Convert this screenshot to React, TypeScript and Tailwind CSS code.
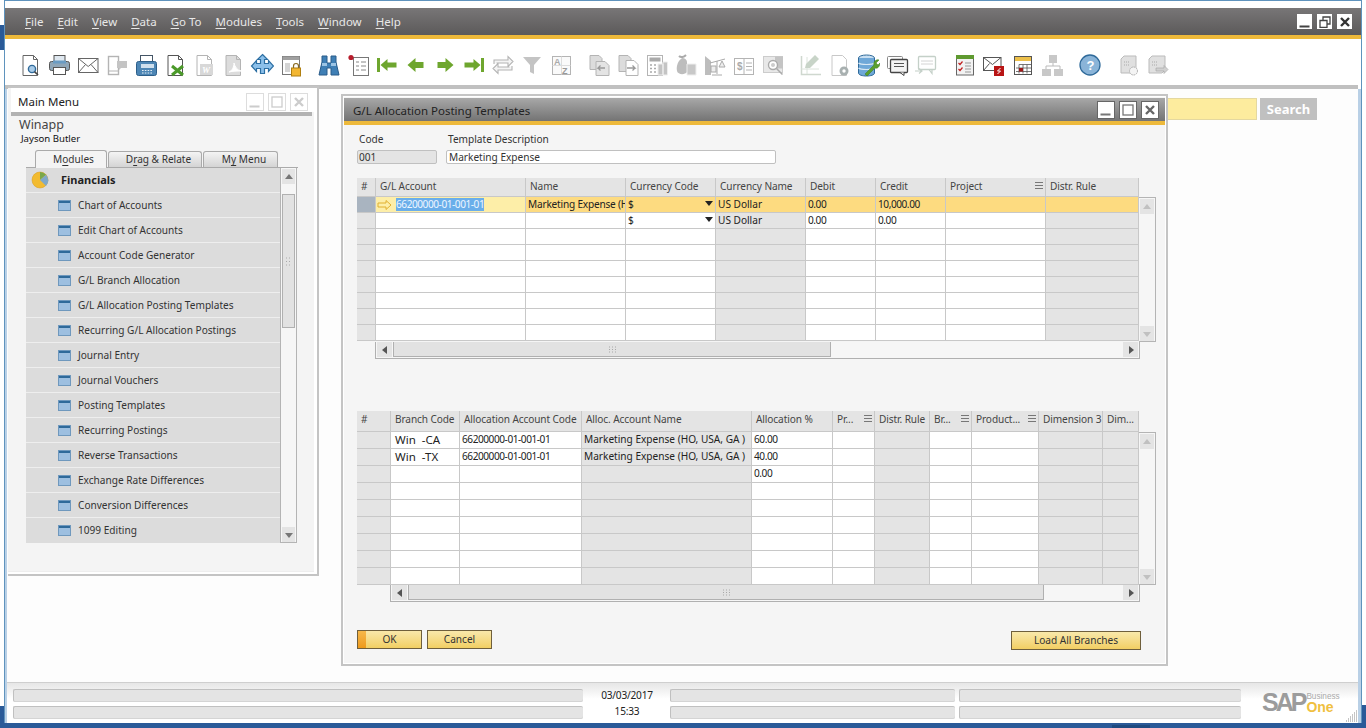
import React from "react";

const D = "#b4b4b4";
const doc = (s: string, f = "#fff") => (
  <>
    <path d="M5 2.500h10.500l4 4v16H5z" fill={f} stroke={s} />
    <path d="M15.500 2.500v4h4" fill="none" stroke={s} />
  </>
);

const icons: React.ReactNode[] = [
  <>{doc("#666")}<circle cx="14" cy="16" r="3.600" fill="#a8cbe8" stroke="#2f6a9a" strokeWidth="1.400" /><path d="M16.500 18.700l3.500 3.300" stroke="#444" strokeWidth="1.600" /></>,
  <><rect x="7" y="2.500" width="11" height="7" fill="#dfe8f0" stroke="#555" /><rect x="2.500" y="8.500" width="20" height="9" rx="2" fill="#8fa6b8" stroke="#555" /><rect x="6" y="7.500" width="13" height="3" fill="#6a9cc4" /><rect x="6.500" y="14.500" width="12" height="7" fill="#fff" stroke="#555" /></>,
  <><rect x="2.500" y="5.500" width="19.500" height="14" fill="#fff" stroke="#666" /><path d="M2.500 5.500l9.700 8 9.800-8M2.500 19.500l7-8M22 19.500l-7-8" fill="none" stroke="#666" /></>,
  <><rect x="3.500" y="3.500" width="10" height="18" fill="#fff" stroke={D} strokeWidth="1.400" /><path d="M3.500 18h10" stroke={D} /><path d="M12 8h10v7h-6l-2 2v-2h-2z" fill="#c4c4c4" /></>,
  <><rect x="6.500" y="2.500" width="12" height="8" fill="#fff" stroke="#456" /><rect x="2.500" y="8.500" width="20" height="14" rx="2" fill="#4d86b5" stroke="#2d5f8a" /><rect x="7" y="11" width="13" height="4" fill="#cfe0ee" /><path d="M8 17.500h11M8 20h11" stroke="#e4eef6" strokeWidth="1.200" strokeDasharray="1.600 1.200" /></>,
  <>{doc("#555")}<path d="M9 13l11 9M20 13l-11 9" stroke="#4c9a2a" strokeWidth="3" /></>,
  <>{doc(D)}<rect x="8" y="11" width="13" height="11" fill="#d8d8d8" /><text x="10" y="20" fontSize="9" fontStyle="italic" fontWeight="700" fill="#fff" fontFamily="Liberation Serif">W</text></>,
  <>{doc(D, "#dcdcdc")}<path d="M8 19c3-1 5-5 5-9 1 4 3 7 7 8-4 0-8 0-12 1z" fill="#fff" stroke="#fff" /></>,
  <path d="M12.500 1.500l5 5h-3v4h4v-3l5 5.500-5 5.500v-3h-4v5h-4v-5h-4v3l-5-5.500 5-5.500v3h4v-4h-3z" fill="#8cc0ea" stroke="#2d6fa3" strokeWidth="1.200" />,
  <><rect x="3.500" y="3.500" width="17" height="18" fill="#fff" stroke="#777" /><rect x="3.500" y="3.500" width="17" height="3.500" fill="#a0a0a0" /><rect x="6" y="10" width="5" height="9" fill="#d4d4d4" /><rect x="12.500" y="15" width="9" height="8" fill="#f2b632" stroke="#b07f10" /><path d="M14.500 15v-2a2.500 2.500 0 015 0v2" fill="none" stroke="#8a6a20" strokeWidth="1.200" /></>,
  <><path d="M5 3h5v7h4V3h5v6l3 13h-8v-7h-4v7H2L5 9z" fill="#3f7fb5" stroke="#2a5c8a" /><path d="M5 10h5v3H5zM14 10h5v3h-5z" fill="#9cc4e4" /></>,
  <><rect x="7.500" y="4.500" width="15" height="18" fill="#fff" stroke="#777" /><path d="M10 9h3M15 9h5M10 13h3M15 13h5M10 17h3M15 17h5" stroke="#888" /><circle cx="5" cy="4.500" r="2.600" fill="#b81c2c" /></>,
  <><rect x="2" y="5" width="3" height="14" fill="#6ea62e" /><path d="M5.500 12l7-6v3.500h9v5h-9v3.500z" fill="#6ea62e" /></>,
  <path d="M3.500 12l8-7v4h8v6h-8v4z" fill="#6ea62e" />,
  <path d="M20.500 12l-8-7v4h-8v6h8v4z" fill="#6ea62e" />,
  <><rect x="19" y="5" width="3" height="14" fill="#6ea62e" /><path d="M18.500 12l-7-6v3.500h-9v5h9v3.500z" fill="#6ea62e" /></>,
  <path d="M3 11V7h14V3.500l5 5-5 5V10H5.500M21 13v4H7v3.500l-5-5 5-5V14h11.500" fill="#f4f4f4" stroke={D} strokeWidth="1.100" />,
  <path d="M3 4h18l-7 8v9l-4-2v-7z" fill="#c4c4c4" />,
  <><rect x="3.500" y="3.500" width="18" height="18" fill="#fafafa" stroke={D} /><path d="M3.500 12.500h18M12.500 3.500v18" stroke="#ddd" /><text x="5" y="12" fontSize="9" fontWeight="700" fill="#aaa" fontFamily="Liberation Sans">A</text><text x="13" y="20.500" fontSize="9" fontWeight="700" fill="#999" fontFamily="Liberation Sans">Z</text></>,
  <><path d="M3 2.500h9l3 3v11H3z" fill="#dcdcdc" stroke={D} /><path d="M9 8.500h9l4 4v10H9z" fill="#e4e4e4" stroke={D} /><path d="M18 15h-7l2.500-2.500M11 15l2.500 2.500" fill="none" stroke="#999" strokeWidth="1.300" /></>,
  <><path d="M3 2.500h9l3 3v13H3z" fill="#dcdcdc" stroke={D} /><path d="M10 7.500h8l4 4v11H10z" fill="#fff" stroke={D} /><path d="M11 15h8l-2.500-2.500M19 15l-2.500 2.500" fill="none" stroke="#999" strokeWidth="1.300" /></>,
  <><rect x="2.500" y="2.500" width="15" height="20" fill="#fff" stroke={D} /><rect x="4.500" y="4.500" width="11" height="4" fill="#aaa" /><path d="M5 12h2M9 12h2M5 15.500h2M9 15.500h2M5 19h2M9 19h2" stroke="#aaa" strokeWidth="1.300" /><path d="M13 11h5v11h-5zM18 9h4.500v13H18z" fill="#c4c4c4" stroke="#eee" /></>,
  <><path d="M8 5c-4 3-6 8-5 13 1 4 8 4 10 1V9C13 7 11 5 8 5z" fill="#bdbdbd" /><path d="M5 3c2 2 5 1 7-1" stroke="#aaa" strokeWidth="2" fill="none" /><path d="M13 11h9v11h-9z" fill="#c8c8c8" stroke="#eee" /></>,
  <><path d="M2 3l6 5v14H2z" fill="#bdbdbd" /><path d="M7 10l15-4M14 8v13M9 22h10" stroke="#aaa" /><rect x="8" y="13" width="5" height="6" fill="#eee" stroke="#aaa" /><path d="M16 14l3-6 3 6z" fill="#eee" stroke="#aaa" /></>,
  <><rect x="2.500" y="5.500" width="19" height="16" fill="#fff" stroke={D} /><path d="M12 5.500v16M14 10h6M14 13.500h6M14 17h6" stroke={D} /><text x="5" y="17" fontSize="10" fontWeight="700" fill="#aaa" fontFamily="Liberation Sans">$</text></>,
  <><rect x="2.500" y="3.500" width="19" height="16" fill="#e8e8e8" stroke="#ccc" /><rect x="14" y="3.500" width="8" height="12" fill="#c4c4c4" /><circle cx="12" cy="12" r="4.500" fill="#fff" stroke="#aaa" strokeWidth="1.400" /><circle cx="12" cy="12" r="2" fill="#ccc" /><path d="M15.500 15.500l6 6" stroke="#aaa" strokeWidth="1.500" /></>,
  <><path d="M3.500 3v18.500H23" fill="none" stroke="#cfd8cf" strokeWidth="1.500" /><path d="M3.500 16H21M9 4v17" stroke="#dce4dc" /><path d="M7 15l1-4 9-9 4 4-9 9z" fill="#c8d4c8" /></>,
  <><path d="M5 2.500h10.500l4 4v16H5z" fill="#fff" stroke="#c8c8c8" /><circle cx="17" cy="18" r="4.500" fill="#a8b0b0" /><circle cx="17" cy="18" r="1.700" fill="#fff" /></>,
  <><ellipse cx="10.500" cy="5" rx="8" ry="3" fill="#c8dff2" stroke="#2f6a9a" /><path d="M2.500 5v15c0 2 4 3 8 3s8-1 8-3V5" fill="#6fa8d8" stroke="#2f6a9a" /><path d="M2.500 10c2 2 14 2 16 0M2.500 15c2 2 14 2 16 0" fill="none" stroke="#d8e8f4" strokeWidth="1.200" /><path d="M9 21l9-9c-1-3 2-6 5-5l-3 3 2 2 2-2c0 4-3 6-5 5l-8 8z" fill="#5aa02c" stroke="#3a7a18" strokeWidth=".5" /></>,
  <><rect x="2.500" y="3.500" width="15" height="12" rx="1" fill="#fff" stroke="#888" /><rect x="5.500" y="6.500" width="17" height="13" rx="1" fill="#f4f4f4" stroke="#444" strokeWidth="1.300" /><path d="M9 10.500h10M9 13.500h10" stroke="#555" /><path d="M15 19.500l4 3v-3" fill="#fff" stroke="#444" /></>,
  <><rect x="4.500" y="3.500" width="17" height="13" rx="1" fill="#fff" stroke="#c4d0c8" strokeWidth="1.300" /><path d="M7 8h12M7 11h12" stroke="#d4d4d4" /><path d="M1 18h7M5 15.500l3 2.500-3 2.500M15 16.500l3 4v-4" fill="none" stroke="#c4d0c8" strokeWidth="1.200" /></>,
  <><rect x="3.500" y="4" width="17" height="18" fill="#f2f2f2" stroke="#666" /><rect x="3" y="2" width="18" height="4" fill="#5f9a30" /><path d="M5.500 10l1.500 1.500 2.500-3M5.500 16l1.500 1.500 2.500-3" fill="none" stroke="#c02020" strokeWidth="1.200" /><path d="M12 10h6M12 13h6M12 16h6M12 19h6" stroke="#999" /></>,
  <><rect x="1.500" y="4.500" width="17.500" height="13" fill="#fff" stroke="#555" /><path d="M1.500 4.500l9 7 8.500-7M1.500 17.500l6-7" fill="none" stroke="#555" /><rect x="12" y="13" width="10" height="10" fill="#b81414" /><path d="M18.500 15l-3 3h3l-3 3" stroke="#fff" fill="none" /></>,
  <><rect x="3.500" y="3.500" width="17" height="18" fill="#fff" stroke="#555" /><rect x="4" y="4" width="16" height="4" fill="#edc04a" /><path d="M8 11.500h12M5 15h15M5 18.500h15M8 11.500v9M12 11.500v9M16 11.500v9" stroke="#555" strokeWidth=".8" /><rect x="8" y="15" width="4" height="3.500" fill="#a01818" /></>,
  <><rect x="9" y="2" width="8" height="8" fill="#c8c8c8" /><path d="M13 10v3M6 13h14v3M6 13v3" stroke="#bbb" fill="none" /><rect x="2" y="16" width="9" height="7" fill="#c8c8c8" /><rect x="14" y="16" width="9" height="7" fill="#c8c8c8" /></>,
  <><circle cx="12" cy="12" r="10" fill="#8ab4d8" stroke="#2f6a9a" strokeWidth="1.300" /><text x="8.500" y="16.500" fontSize="13" fontWeight="700" fill="#fff" fontFamily="Liberation Sans">?</text></>,
  <><path d="M5 6l3-3h12v14l-3 3H5z" fill="#e0e0e0" stroke="#bbb" /><path d="M8 9h6M8 12h6" stroke="#aaa" strokeDasharray="1 1" /><circle cx="17.500" cy="18" r="4" fill="#f4f4f4" stroke="#aaa" strokeDasharray="1.500 .8" /></>,
  <><path d="M4 6l3-3h13v14l-3 3H4z" fill="#e0e0e0" stroke="#bbb" /><path d="M7 9h6M7 12h6" stroke="#aaa" strokeDasharray="1 1" /><path d="M11 15h8v-2.500l4 4-4 4V18h-8z" fill="#d0d0d0" stroke="#aaa" strokeWidth=".7" /></>,
];

const gapBefore: Record<number, string> = {
  10: "ml-[9px]", 19: "ml-[9px]", 26: "ml-[8px]", 31: "ml-[10px]", 35: "ml-[9px]", 36: "ml-[9px]",
};

function Toolbar() {
  return (
    <div className="flex h-[46px] items-center bg-white pl-[10px] pt-[6px]">
      {icons.map((ic, i) => (
        <div key={i} className={`flex w-[29px] shrink-0 justify-center ${gapBefore[i] ?? ""}`}>
          <svg width="24" height="24" viewBox="0 0 24 24">{ic}</svg>
        </div>
      ))}
    </div>
  );
}

function Ul({ a, u, b }: { a?: string; u: string; b?: string }) {
  return (
    <span>
      {a}
      <span className="underline underline-offset-2">{u}</span>
      {b}
    </span>
  );
}

function WinBtn({ kind, cls }: { kind: "min" | "max" | "restore" | "close"; cls: string }) {
  return (
    <div className={`flex items-center justify-center ${cls}`}>
      <svg width="12" height="12" viewBox="0 0 12 12" className="text-current">
        {kind === "min" && <rect x="0.500" y="9.500" width="10" height="2" fill="currentColor" />}
        {kind === "max" && <rect x="1" y="1" width="10" height="10" fill="none" stroke="currentColor" strokeWidth="1.300" />}
        {kind === "restore" && (
          <path d="M1 4.500h7v7H1zM4 4.500V1h7v7H8" fill="none" stroke="currentColor" strokeWidth="1.300" />
        )}
        {kind === "close" && <path d="M2 2l8 8M10 2l-8 8" stroke="currentColor" strokeWidth="2.400" />}
      </svg>
    </div>
  );
}

function Tri({ dir, c = "#777" }: { dir: "up" | "down" | "left" | "right"; c?: string }) {
  const d = { up: "M1 7l4-5 4 5z", down: "M1 3l4 5 4-5z", left: "M7 1L2 5l5 4z", right: "M3 1l5 4-5 4z" }[dir];
  return (
    <svg width="10" height="10" viewBox="0 0 10 10">
      <path d={d} fill={c} />
    </svg>
  );
}

const grips = (
  <svg width="9" height="7" viewBox="0 0 9 7">
    <path d="M1 1h1M4 1h1M7 1h1M1 3.500h1M4 3.500h1M7 3.500h1M1 6h1M4 6h1M7 6h1" stroke="#a8a8a8" />
  </svg>
);

const menuItems = [
  "Chart of Accounts", "Edit Chart of Accounts", "Account Code Generator", "G/L Branch Allocation",
  "G/L Allocation Posting Templates", "Recurring G/L Allocation Postings", "Journal Entry", "Journal Vouchers",
  "Posting Templates", "Recurring Postings", "Reverse Transactions", "Exchange Rate Differences",
  "Conversion Differences", "1099 Editing",
];

function MainMenu() {
  return (
    <div className="absolute left-[8px] top-[86px] flex h-[490px] w-[311px] flex-col border-2 border-l-0 border-[#c4c4c4] bg-white pb-[2px] pr-[3px]">
      <div className="flex h-[488px] flex-col bg-[#f4f4f4] pl-[3px] shadow-[inset_0_-1px_0_#eee]">
        <div className="flex h-[24px] shrink-0 items-center justify-between bg-white pl-[7px] pr-[6px] pt-[4px]">
          <span className="text-[11.500px] text-[#222]">Main Menu</span>
          <div className="flex gap-[4px]">
            <WinBtn kind="min" cls="h-[18px] w-[18px] border border-[#ddd] bg-white text-[#ccc]" />
            <WinBtn kind="max" cls="h-[18px] w-[18px] border border-[#ddd] bg-white text-[#ccc]" />
            <WinBtn kind="close" cls="h-[18px] w-[18px] border border-[#ddd] bg-white text-[#ccc]" />
          </div>
        </div>
        <div className="mr-[2px] h-[4px] shrink-0 bg-[#b2b2b2]" />
        <div className="mt-[1px] pl-[8px] text-[12.500px] leading-[15px] text-[#444]">Winapp</div>
        <div className="pl-[10px] text-[9.600px] leading-[13px] text-[#111]">Jayson Butler</div>
        <div className="ml-[24px] mt-[5px] flex h-[17px] items-end text-[10.100px] text-[#333]">
          <div className="relative z-10 -mb-px flex h-[18px] w-[72px] items-center justify-center rounded-t-[3px] border border-b-0 border-[#aaa] bg-[#f4f4f4] pl-[5px] pt-[1px]">
            <Ul a="M" u="o" b="dules" />
          </div>
          <div className="ml-[1px] flex h-[16px] w-[94px] items-center justify-center rounded-t-[3px] border border-b-0 border-[#aaa] bg-gradient-to-b from-[#f4f4f4] to-[#d4d4d4] pl-[7px] pt-[1px]">
            <Ul a="D" u="r" b="ag & Relate" />
          </div>
          <div className="ml-[1px] flex h-[16px] w-[75px] items-center justify-center rounded-t-[3px] border border-b-0 border-[#aaa] bg-gradient-to-b from-[#f4f4f4] to-[#d4d4d4] pl-[7px] pt-[1px]">
            <Ul a="M" u="y" b=" Menu" />
          </div>
        </div>
        <div className="ml-[15px] flex h-[376px] w-[272px] border-t border-[#aaa]">
          <div className="w-[254px] shrink-0 bg-[#dcdcdc]">
            <div className="flex h-[25px] items-center border-b border-[#eee] pl-[5px]">
              <svg width="18" height="18" viewBox="0 0 18 18">
                <circle cx="9" cy="9" r="8" fill="#f2bb30" stroke="#d89a18" strokeWidth=".5" />
                <path d="M9 9V1a8 8 0 016 2.700z" fill="#7aa84a" />
                <path d="M9 9l6-5.300A8 8 0 0115 15z" fill="#7fa8c8" />
              </svg>
              <span className="ml-[12px] text-[11px] font-bold text-[#222]">Financials</span>
            </div>
            {menuItems.map((m) => (
              <div key={m} className="flex h-[25px] items-center border-b border-[#eee] pl-[33px] last:border-b-0">
                <span className="h-[9px] w-[11px] shrink-0 border-t-2 border-[#2f6a9a] bg-[#9dbfe0] outline outline-1 outline-[#6f98bd]" />
                <span className="ml-[8px] pt-[1px] text-[10.100px] text-[#333]">{m}</span>
              </div>
            ))}
          </div>
          <div className="flex w-[17px] shrink-0 flex-col items-center border-x border-b border-[#b4b4b4] bg-[#f6f6f6] px-[1px] pt-[1px]">
            <div className="flex h-[15px] w-full items-center justify-center bg-[#e4e4e4]"><Tri dir="up" /></div>
            <div className="mt-[10px] flex h-[134px] w-full items-center justify-center border border-[#b0b0b0] bg-[#e2e2e2]">
              <svg width="7" height="9" viewBox="0 0 7 9"><path d="M1 1h1M4 1h1M1 4.500h1M4 4.500h1M1 8h1M4 8h1" stroke="#aaa" /></svg>
            </div>
            <div className="flex-1" />
            <div className="flex h-[15px] w-full items-center justify-center bg-[#e4e4e4]"><Tri dir="down" /></div>
          </div>
        </div>
      </div>
    </div>
  );
}

function VBar({ h }: { h: string }) {
  return (
    <div className={`flex w-[17px] shrink-0 flex-col border-y border-r border-[#b4b4b4] bg-[#f6f6f6] px-[1px] pt-[1px] ${h}`}>
      <div className="flex h-[15px] items-center justify-center bg-[#e4e4e4]"><Tri dir="up" c="#c0c0c0" /></div>
      <div className="flex-1" />
      <div className="flex h-[15px] items-center justify-center bg-[#e4e4e4]"><Tri dir="down" c="#c0c0c0" /></div>
    </div>
  );
}

function HBar({ cls, thumb }: { cls: string; thumb: string }) {
  return (
    <div className={`flex h-[17px] items-center border-x border-b border-[#b0b0b0] bg-[#f6f6f6] px-[1px] pb-[1px] ${cls}`}>
      <div className="flex h-full w-[15px] shrink-0 items-center justify-center bg-[#e4e4e4]"><Tri dir="left" c="#555" /></div>
      <div className={`ml-[1px] flex h-full shrink-0 items-center justify-center border-x border-b border-[#b0b0b0] bg-[#e2e2e2] ${thumb}`}>{grips}</div>
      <div className="ml-auto flex h-full w-[15px] shrink-0 items-center justify-center bg-[#e4e4e4]"><Tri dir="right" c="#555" /></div>
    </div>
  );
}

const line = "border-r border-b border-[#c8c8c8]";
const isNum = (s?: string) => !!s && /^[\d,.\-]+$/.test(s);

function Head({ label, menu, pb }: { label: string; menu?: boolean; pb: string }) {
  return (
    <div className={`relative flex items-center overflow-hidden whitespace-nowrap bg-[#e4e4e4] pl-[4px] tracking-[-0.1px] text-[#444] ${pb} ${line}`}>
      {label}
      {menu && (
        <svg width="8" height="7" viewBox="0 0 8 7" className="absolute right-[2px] top-[4px]">
          <path d="M0 .500h8M0 3.500h8M0 6.500h8" stroke="#777" />
        </svg>
      )}
    </div>
  );
}

function Cell({ bg, children, pad = "pl-[2px]" }: { bg: string; children?: React.ReactNode; pad?: string }) {
  return (
    <div className={`relative flex items-center overflow-hidden whitespace-nowrap text-[#222] ${pad} ${bg} ${line}`}>{children}</div>
  );
}

function Val({ v }: { v?: string }) {
  const t = isNum(v) ? "tracking-[-0.45px]" : v === "Marketing Expense (H" ? "tracking-[-0.2px]" : "";
  return <span className={t}>{v}</span>;
}

const cols1 = [
  { h: "#", grey: true }, { h: "G/L Account" }, { h: "Name" }, { h: "Currency Code" }, { h: "Currency Name", grey: true },
  { h: "Debit" }, { h: "Credit" }, { h: "Project", menu: true }, { h: "Distr. Rule", grey: true },
];
const rows1: (string | undefined)[][] = [
  [undefined, undefined, "Marketing Expense (H", "$", "US Dollar", "0.00", "10,000.00"],
  [undefined, undefined, undefined, "$", "US Dollar", "0.00", "0.00"],
  ...Array.from({ length: 7 }, () => [] as (string | undefined)[]),
];

function Grid1() {
  return (
    <div className="ml-[13px] mt-[14px] w-[799px]">
      <div className="flex">
        <div className="grid w-[782px] grid-cols-[19px_150px_100px_90px_90px_70px_70px_100px_93px] grid-rows-[19px_repeat(9,16px)] text-[10.100px]">
          {cols1.map((c) => <Head key={c.h} label={c.h} menu={c.menu} pb="pb-[1px]" />)}
          {rows1.map((r, ri) =>
            cols1.map((c, ci) => {
              const sel = ri === 0;
              let bg = c.grey ? "bg-[#e4e4e4]" : "bg-white";
              if (sel) bg = "bg-[#fddb80]";
              if (sel && ci === 0) bg = "bg-[#a9b4c0]";
              if (sel && ci === 1) bg = "bg-[#fdeea8]";
              if (sel && ci === 1) {
                return (
                  <Cell key={ci} bg={bg} pad="pl-[1px]">
                    <svg width="15" height="10" viewBox="0 0 15 10">
                      <path d="M1 3h8V.500L14 5l-5 4.500V7H1z" fill="#fdeea8" stroke="#e0b030" />
                    </svg>
                    <span className="ml-[4px] bg-[#6aaeea] leading-[13px] tracking-[-0.45px] text-[#eef6ff]">66200000-01-001-01</span>
                  </Cell>
                );
              }
              return (
                <Cell key={ci} bg={bg} pad="pl-[2px] pt-[1px]">
                  <Val v={r[ci]} />
                  {ci === 3 && r[ci] && (
                    <span className="absolute right-[1px] top-[1px]"><Tri dir="down" c="#222" /></span>
                  )}
                </Cell>
              );
            }),
          )}
        </div>
        <VBar h="mt-[19px] h-[145px]" />
      </div>
      <HBar cls="ml-[18px] w-[765px]" thumb="w-[438px]" />
    </div>
  );
}

const cols2 = [
  { h: "#", grey: true }, { h: "Branch Code" }, { h: "Allocation Account Code" }, { h: "Alloc. Account Name", grey: true },
  { h: "Allocation %" }, { h: "Pr...", menu: true }, { h: "Distr. Rule", grey: true }, { h: "Br...", menu: true },
  { h: "Product...", menu: true }, { h: "Dimension 3", grey: true }, { h: "Dim...", grey: true },
];
const rows2: (string | undefined)[][] = [
  [undefined, "Win  -CA", "66200000-01-001-01", "Marketing Expense (HO, USA, GA )", "60.00"],
  [undefined, "Win  -TX", "66200000-01-001-01", "Marketing Expense (HO, USA, GA )", "40.00"],
  [undefined, undefined, undefined, undefined, "0.00"],
  ...Array.from({ length: 6 }, () => [] as (string | undefined)[]),
];

function Grid2() {
  return (
    <div className="ml-[13px] mt-[52px] w-[799px]">
      <div className="flex">
        <div className="grid w-[782px] grid-cols-[34px_69px_122px_170px_81px_42px_55px_42px_67px_64px_36px] grid-rows-[21px_repeat(9,17px)] text-[10.100px]">
          {cols2.map((c, i) => <Head key={i} label={c.h} menu={c.menu} pb="pb-[2px]" />)}
          {rows2.map((r, ri) =>
            cols2.map((c, ci) => (
              <Cell key={ci} bg={c.grey ? "bg-[#e4e4e4]" : "bg-white"} pad={ci === 1 ? "pl-[4px]" : "pl-[2px]"}>
                {ci === 1 ? <span className="whitespace-pre text-[11.500px]">{r[ci]}</span> : <Val v={r[ci]} />}
              </Cell>
            )),
          )}
        </div>
        <VBar h="mt-[21px] h-[153px]" />
      </div>
      <HBar cls="ml-[33px] w-[750px]" thumb="w-[636px]" />
    </div>
  );
}

function YBtn({ cls, children }: { cls: string; children: React.ReactNode }) {
  return (
    <div className={`relative flex h-[19px] items-center justify-center border border-[#6f5f3c] bg-gradient-to-b from-[#f9e8aa] to-[#f2cf62] text-[10.100px] text-[#333] ${cls}`}>
      {children}
    </div>
  );
}

function Dialog() {
  return (
    <div className="absolute left-[341px] top-[94px] h-[572px] w-[827px] border-2 border-[#c4c4c4] bg-white p-[1px]">
      <div className="flex h-full flex-col bg-[#f5f5f5]">
        <div className="mt-[1px] flex h-[23px] shrink-0 items-center justify-between bg-gradient-to-b from-[#a8a8a8] to-[#747474] pl-[9px] pr-[6px]">
          <span className="pt-[2px] text-[11.500px] text-[#222]">G/L Allocation Posting Templates</span>
          <div className="flex gap-[4px]">
            <WinBtn kind="min" cls="h-[18px] w-[18px] border border-[#666] bg-white text-[#777]" />
            <WinBtn kind="max" cls="h-[18px] w-[18px] border border-[#666] bg-white text-[#777]" />
            <WinBtn kind="close" cls="h-[18px] w-[18px] border border-[#666] bg-white text-[#666]" />
          </div>
        </div>
        <div className="h-[4px] shrink-0 bg-[#edb93b]" />
        <div className="ml-[13px] mt-[7px] flex text-[10.100px] leading-[14px] text-[#333]">
          <div className="w-[89px]">
            <div className="pl-[2px]">Code</div>
            <div className="mt-[4px] flex h-[14px] w-[80px] items-center rounded-[2px] border border-[#c0c0c0] bg-[#e4e4e4] pl-[1px]">001</div>
          </div>
          <div>
            <div className="pl-[2px]">Template Description</div>
            <div className="mt-[4px] flex h-[14px] w-[330px] items-center rounded-[2px] border border-[#c0c0c0] bg-white pl-[2px]">Marketing Expense</div>
          </div>
        </div>
        <Grid1 />
        <Grid2 />
        <div className="ml-[13px] mr-[24px] mt-[28px] flex items-start">
          <YBtn cls="w-[65px]">
            <span className="absolute inset-y-0 left-0 w-[8px] bg-gradient-to-b from-[#f6b84a] to-[#ee9a18]" />
            OK
          </YBtn>
          <YBtn cls="ml-[5px] w-[65px]">Cancel</YBtn>
          <YBtn cls="ml-auto mt-[1px] w-[130px]">Load All Branches</YBtn>
        </div>
      </div>
    </div>
  );
}

function Field({ cls }: { cls: string }) {
  return <div className={`h-[13px] rounded-[2px] border-l border-t border-[#c0c0c0] bg-[#e4e4e4] shadow-[inset_0_-1px_0_#d4d4d4] ${cls}`} />;
}

function StatusBar() {
  return (
    <div className="relative flex h-[41px] shrink-0 items-start border-t border-[#cfcfcf] bg-gradient-to-b from-[#e6e6e6] to-white to-40% pl-[6px] pt-[6px] text-[10.100px] text-[#222]">
      <div className="flex flex-col gap-[4px]">
        <Field cls="w-[570px]" />
        <Field cls="w-[570px]" />
      </div>
      <div className="flex w-[87px] flex-col items-center gap-[3px] pl-[1px] leading-[13px] tracking-[-0.2px]">
        <span>03/03/2017</span>
        <span>15:33</span>
      </div>
      <div className="flex flex-col gap-[4px]">
        <Field cls="w-[285px]" />
        <Field cls="w-[285px]" />
      </div>
      <div className="ml-[4px] flex flex-col gap-[4px]">
        <Field cls="w-[282px]" />
        <Field cls="w-[282px]" />
      </div>
      <div className="ml-[21px] mt-[-1px] flex h-[28px] items-center font-['Liberation_Sans',sans-serif]">
        <span className="text-[25px] font-bold leading-none tracking-[-3px] text-[#9c9c9c]">SAP</span>
        <div className="ml-[2px] flex flex-col">
          <span className="text-[8.200px] leading-[10px] text-[#aaa]">Business</span>
          <span className="text-[14px] font-bold leading-[11px] text-[#f0c040]">One</span>
        </div>
      </div>
      <svg width="12" height="12" viewBox="0 0 12 12" className="absolute bottom-[1px] right-0">
        <path d="M10 1h1M8 3h3M6 5h5M4 7h7M2 9h9M0 11h11" stroke="#8a8a8a" strokeDasharray="1 1" />
      </svg>
    </div>
  );
}

export default function App() {
  return (
    <div className="relative h-[728px] w-[1366px] overflow-hidden bg-white font-['Noto_Sans',sans-serif]">
      <div className="absolute left-0 top-[25px] h-[25px] w-[4px] bg-[#2a5a98]" />
      <div className="absolute bottom-0 left-0 h-[22px] w-[4px] bg-[#2a5a98]" />
      <div className="absolute bottom-0 right-0 h-[23px] w-[4px] bg-[#2a5a98]" />
      <div className="ml-[4px] flex h-[723px] w-[1358px] flex-col border-x border-t border-[#5f93bd] pt-[7px]">
        <div className="flex h-[27px] shrink-0 items-center justify-between bg-gradient-to-b from-[#787677] to-[#5c5a5a] pl-[20px] pr-[9px]">
          <div className="flex gap-[14px] text-[11.500px] text-[#e8e8e8]">
            <Ul u="F" b="ile" />
            <Ul u="E" b="dit" />
            <Ul u="V" b="iew" />
            <Ul u="D" b="ata" />
            <Ul u="G" b="o To" />
            <Ul u="M" b="odules" />
            <Ul u="T" b="ools" />
            <Ul u="W" b="indow" />
            <Ul u="H" b="elp" />
          </div>
          <div className="flex gap-[5px]">
            <WinBtn kind="min" cls="h-[15px] w-[15px] bg-white text-[#444]" />
            <WinBtn kind="restore" cls="h-[15px] w-[15px] bg-white text-[#444]" />
            <WinBtn kind="close" cls="h-[15px] w-[15px] bg-white text-[#333]" />
          </div>
        </div>
        <div className="h-[4px] shrink-0 bg-[#eeb93a]" />
        <div className="mr-[3px] shrink-0"><Toolbar /></div>
        <div className="mr-[3px] h-[4px] shrink-0 bg-[#c0c0c0]" />
        <div className="flex-1 border-x-[3px] border-l-[2px] border-x-[#b9d0e6] bg-[#fdfdfd]" />
        <div className="border-x-[3px] border-l-[2px] border-x-[#b9d0e6]"><StatusBar /></div>
      </div>
      <div className="h-[5px] w-full bg-[#2a5a98]" />
      <div className="absolute bottom-0 left-[1112px] h-[3px] w-[38px] bg-[#1e4a80]" />

      <div className="absolute left-[1150px] top-[98px] flex h-[22px] items-stretch gap-[3px]">
        <div className="w-[107px] border border-[#e4d8a0] bg-[#fdec9e]" />
        <div className="flex w-[57px] items-center justify-center bg-[#c0c0c0] pt-[1px] text-[13px] font-bold text-white">Search</div>
      </div>
      <MainMenu />
      <Dialog />
    </div>
  );
}
